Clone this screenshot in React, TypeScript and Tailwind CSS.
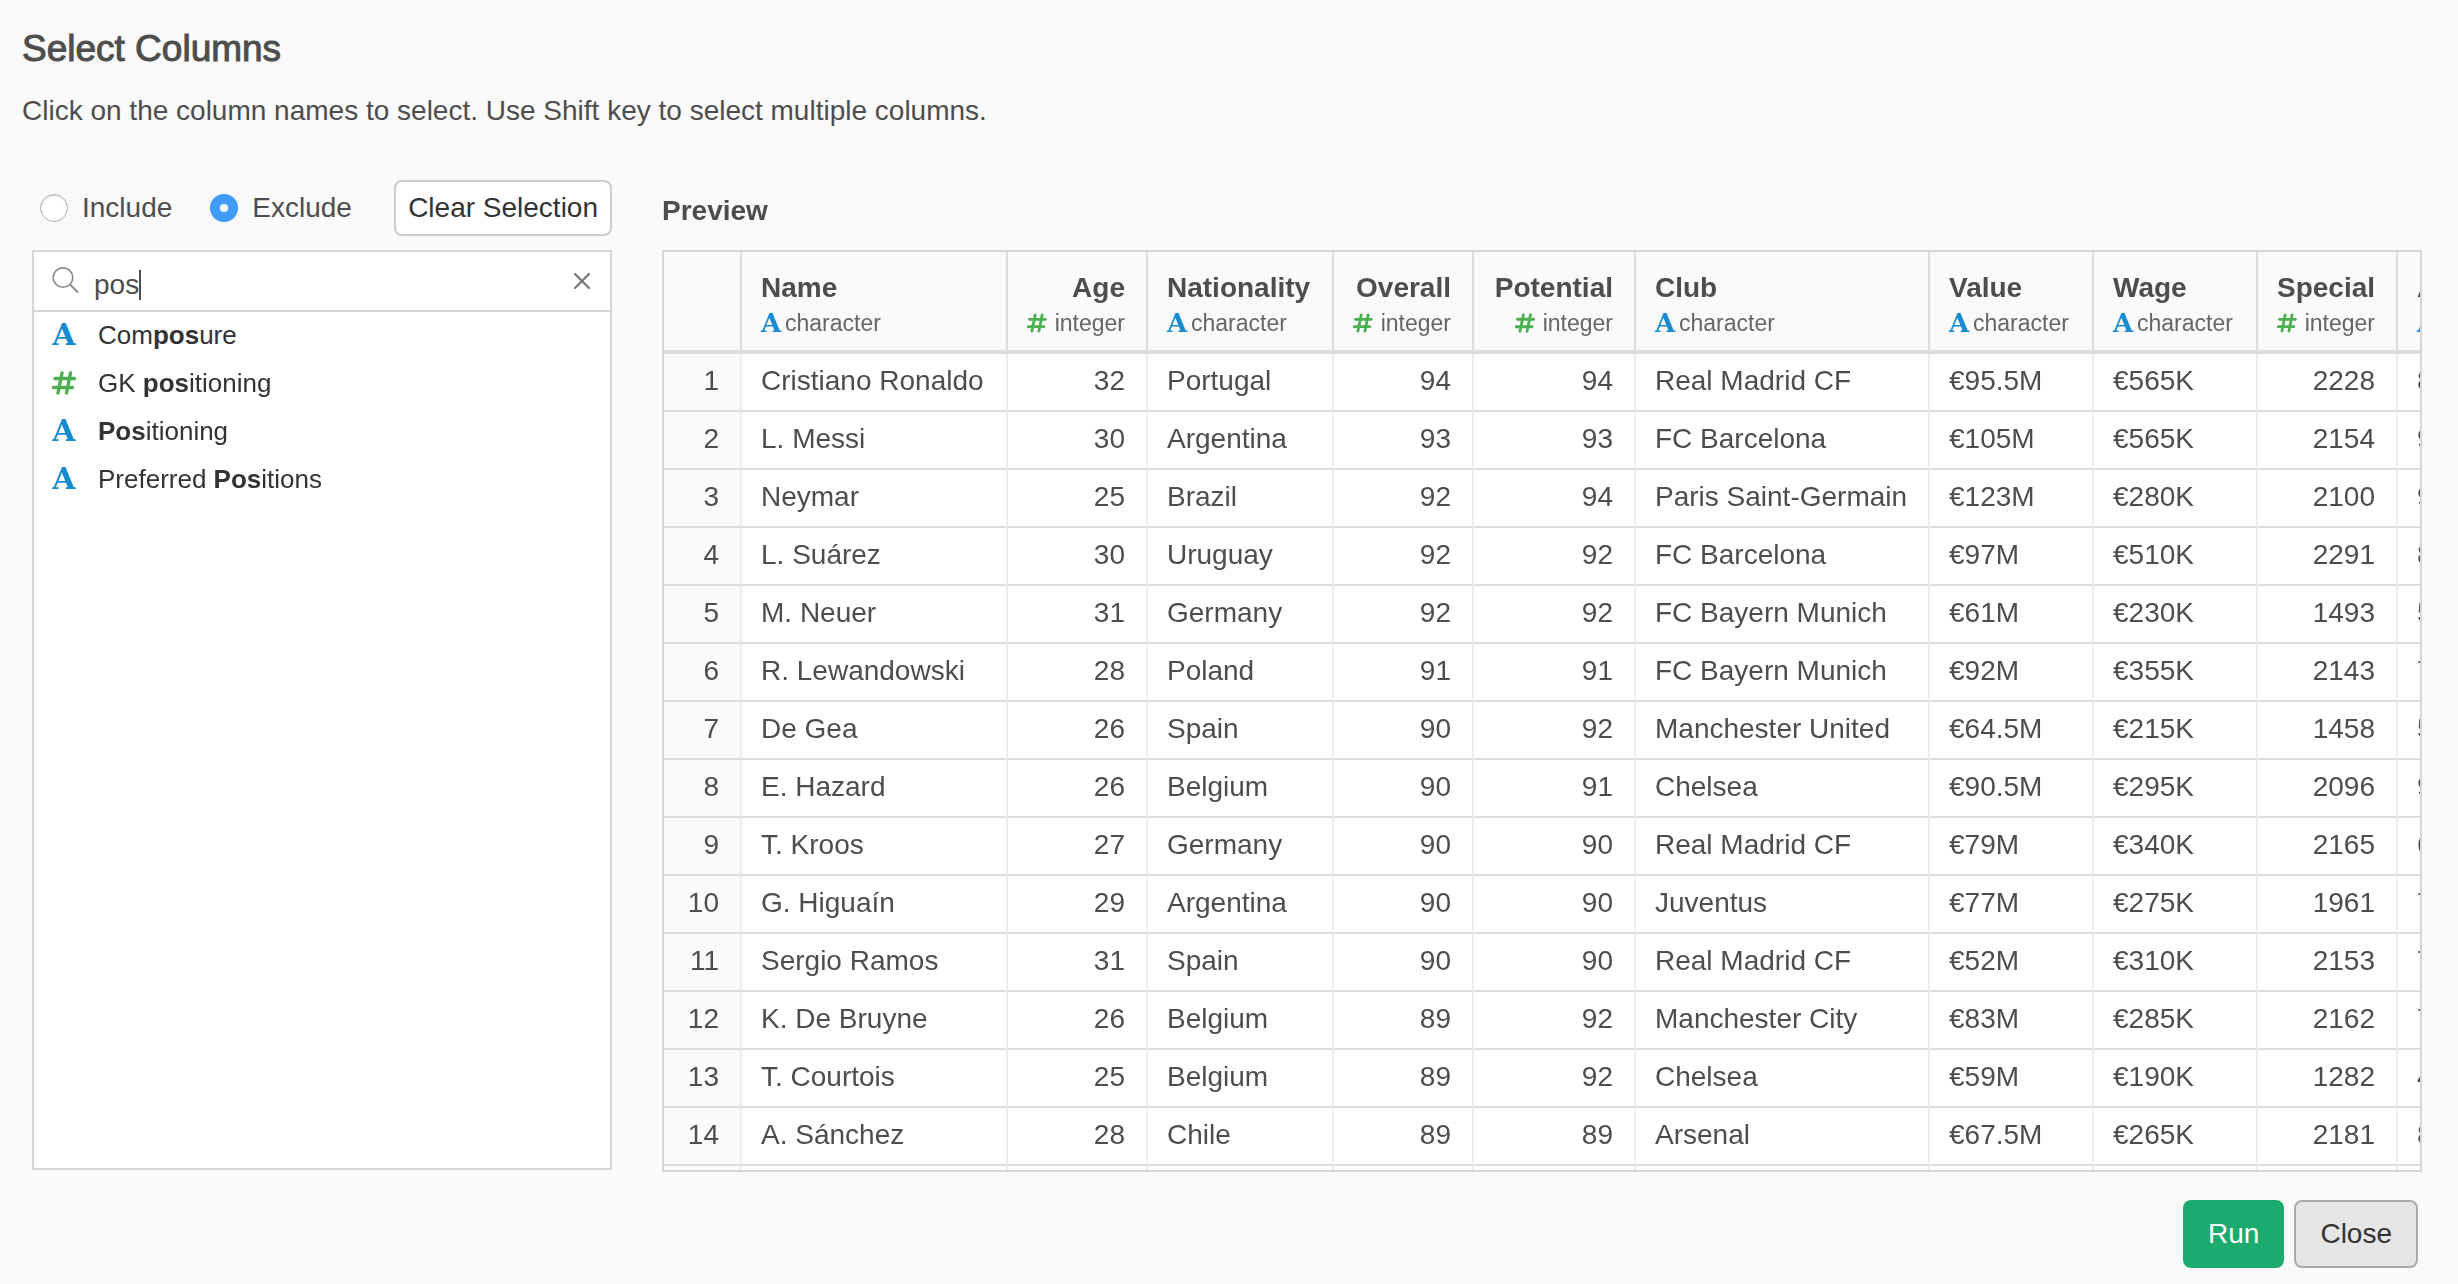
import { useState } from "react";

type ColumnType = "character" | "integer";

interface Column {
  name: string;
  type: ColumnType;
  width: string;
}

const columns: Column[] = [
  { name: "Name", type: "character", width: "w-[266px]" },
  { name: "Age", type: "integer", width: "w-[140px]" },
  { name: "Nationality", type: "character", width: "w-[186px]" },
  { name: "Overall", type: "integer", width: "w-[140px]" },
  { name: "Potential", type: "integer", width: "w-[162px]" },
  { name: "Club", type: "character", width: "w-[294px]" },
  { name: "Value", type: "character", width: "w-[164px]" },
  { name: "Wage", type: "character", width: "w-[164px]" },
  { name: "Special", type: "integer", width: "w-[140px]" },
  { name: "Acceleration", type: "character", width: "w-[200px]" },
];

const players = [
  ["Cristiano Ronaldo", "32", "Portugal", "94", "94", "Real Madrid CF", "€95.5M", "€565K", "2228", "89"],
  ["L. Messi", "30", "Argentina", "93", "93", "FC Barcelona", "€105M", "€565K", "2154", "92"],
  ["Neymar", "25", "Brazil", "92", "94", "Paris Saint-Germain", "€123M", "€280K", "2100", "94"],
  ["L. Suárez", "30", "Uruguay", "92", "92", "FC Barcelona", "€97M", "€510K", "2291", "88"],
  ["M. Neuer", "31", "Germany", "92", "92", "FC Bayern Munich", "€61M", "€230K", "1493", "58"],
  ["R. Lewandowski", "28", "Poland", "91", "91", "FC Bayern Munich", "€92M", "€355K", "2143", "79"],
  ["De Gea", "26", "Spain", "90", "92", "Manchester United", "€64.5M", "€215K", "1458", "57"],
  ["E. Hazard", "26", "Belgium", "90", "91", "Chelsea", "€90.5M", "€295K", "2096", "93"],
  ["T. Kroos", "27", "Germany", "90", "90", "Real Madrid CF", "€79M", "€340K", "2165", "60"],
  ["G. Higuaín", "29", "Argentina", "90", "90", "Juventus", "€77M", "€275K", "1961", "78"],
  ["Sergio Ramos", "31", "Spain", "90", "90", "Real Madrid CF", "€52M", "€310K", "2153", "75"],
  ["K. De Bruyne", "26", "Belgium", "89", "92", "Manchester City", "€83M", "€285K", "2162", "76"],
  ["T. Courtois", "25", "Belgium", "89", "92", "Chelsea", "€59M", "€190K", "1282", "46"],
  ["A. Sánchez", "28", "Chile", "89", "89", "Arsenal", "€67.5M", "€265K", "2181", "88"],
  ["", "", "", "", "", "", "", "", "", ""],
];

const allColumns: { name: string; type: ColumnType }[] = [
  { name: "Composure", type: "character" },
  { name: "GK positioning", type: "integer" },
  { name: "Positioning", type: "character" },
  { name: "Preferred Positions", type: "character" },
];

const TypeIcon = ({ type, className }: { type: ColumnType; className: string }) => {
  if (type === "integer") {
    return (
      <svg viewBox="0 0 24 24" className={className} fill="none" stroke="#4caf50" strokeWidth="3.4" strokeLinecap="round" aria-hidden="true">
        <path d="M10 2 6 22M18.5 2l-4 20M3 7.500H22.500M1.500 16.500h19" />
      </svg>
    );
  }
  return (
    <span className={`${className} flex items-center justify-center font-["DejaVu_Serif",serif] font-bold text-[#168bd2]`}>
      A
    </span>
  );
};

// Bold the part of the name that matches the search text
const Highlight = ({ text, query }: { text: string; query: string }) => {
  const start = text.toLowerCase().indexOf(query.toLowerCase());
  if (!query || start < 0) return <span>{text}</span>;
  const end = start + query.length;
  return (
    <span>
      {text.slice(0, start)}
      <b>{text.slice(start, end)}</b>
      {text.slice(end)}
    </span>
  );
};

const ModeRadio = ({ label, checked, onChange }: { label: string; checked: boolean; onChange: () => void }) => (
  <label className="flex items-center gap-[14px]">
    <input
      type="radio"
      name="mode"
      checked={checked}
      onChange={onChange}
      className="size-7 appearance-none rounded-full border border-[#b0b0b0] bg-white shadow-[inset_0_1px_2px_#00000022] checked:border-[10px] checked:border-[#409bfb] checked:shadow-none"
    />
    {label}
  </label>
);

const App = () => {
  const [mode, setMode] = useState("exclude");
  const [query, setQuery] = useState("pos");

  const matches = allColumns.filter((c) => c.name.toLowerCase().includes(query.toLowerCase()));

  return (
    <div className='flex min-h-screen flex-col bg-[#fafafa] font-["Liberation_Sans",Arial,sans-serif] text-[28px] leading-8 text-[#4d4d4d]'>
      <header className="px-[22px] pt-[26px]">
        <h1 className="text-[37px] leading-[46px] [-webkit-text-stroke:1px_#4d4d4d]">Select Columns</h1>
        <p className="mt-[23px]">Click on the column names to select. Use Shift key to select multiple columns.</p>
      </header>

      <main className="mt-[53px] flex pr-9 pl-8">
        <section className="w-[580px] shrink-0">
          <div className="flex h-14 items-center gap-[38px] pl-2">
            <ModeRadio label="Include" checked={mode === "include"} onChange={() => setMode("include")} />
            <ModeRadio label="Exclude" checked={mode === "exclude"} onChange={() => setMode("exclude")} />
            <button className="ml-auto h-14 rounded-lg border-2 border-[#ccc] bg-white px-3 text-[#333]">
              Clear Selection
            </button>
          </div>

          <div className="mt-[14px] h-[920px] border-2 border-[#d6d6d6] bg-white">
            <div className="flex h-[60px] items-center border-b-2 border-[#d6d6d6] pr-5 pl-[18px]">
              <svg viewBox="0 0 28 28" className="size-7 shrink-0" fill="none" stroke="#8c8c8c" strokeWidth="1.6" aria-hidden="true">
                <circle cx="11" cy="10.5" r="9.8" />
                <path d="m18 17.500 8 8" strokeWidth="2" />
              </svg>
              <label className="mt-2 ml-[14px] flex min-w-0 flex-1 items-center">
                <input
                  type="text"
                  aria-label="Search columns"
                  autoFocus
                  value={query}
                  onChange={(e) => setQuery(e.target.value)}
                  className="field-sizing-content max-w-full caret-transparent outline-none"
                />
                <span className="h-[30px] w-0.5 bg-[#4d4d4d]" />
              </label>
              <button aria-label="Clear search" onClick={() => setQuery("")}>
                <svg viewBox="0 0 16 16" className="size-4" fill="none" stroke="#777" strokeWidth="2.2" strokeLinecap="round">
                  <path d="m1 1 14 14M15 1 1 15" />
                </svg>
              </button>
            </div>
            <ul className="text-[26px] text-[#333]">
              {matches.map((c) => (
                <li key={c.name} className="flex h-12 items-center gap-[22px] pb-0.5 pl-[18px]">
                  <TypeIcon type={c.type} className="size-6 text-[30px]" />
                  <Highlight text={c.name} query={query} />
                </li>
              ))}
            </ul>
          </div>
        </section>

        <section className="ml-[50px] min-w-0 flex-1">
          <h2 className="flex h-[70px] items-center pb-2 font-bold">Preview</h2>
          <div className="h-[922px] overflow-hidden border-2 border-[#d6d6d6] bg-white">
            <table className="w-[1934px] table-fixed border-separate border-spacing-0">
              <thead>
                <tr className="h-[102px] bg-[#fafafa]">
                  <td className="w-[78px] border-r-2 border-b-4 border-[#dcdcdc]" />
                  {columns.map((c) => (
                    <th
                      key={c.name}
                      scope="col"
                      className={`${c.width} border-r-2 border-b-4 border-[#dcdcdc] px-[19px] pt-2 whitespace-nowrap ${c.type === "integer" ? "pr-[21px] text-right" : "text-left"}`}
                    >
                      {c.name}
                      <div className={`mt-[3px] flex items-center text-[23px] font-normal text-[#666] ${c.type === "integer" ? "justify-end gap-2" : "gap-1"}`}>
                        <TypeIcon type={c.type} className="size-5 text-[26px]" />
                        {c.type}
                      </div>
                    </th>
                  ))}
                </tr>
              </thead>
              <tbody>
                {players.map((row, i) => (
                  <tr key={i} className="h-[58px]">
                    <th scope="row" className="border-r-2 border-b-2 border-r-[#ececec] border-b-[#dcdcdc] bg-[#fafafa] pr-[21px] pb-0.5 text-right font-normal">
                      {row[0] && i + 1}
                    </th>
                    {row.map((value, j) => (
                      <td
                        key={columns[j].name}
                        className={`border-r-2 border-b-2 border-r-[#ececec] border-b-[#dcdcdc] px-[19px] pb-0.5 whitespace-nowrap ${columns[j].type === "integer" ? "pr-[21px] text-right" : "text-left"}`}
                      >
                        {value}
                      </td>
                    ))}
                  </tr>
                ))}
              </tbody>
            </table>
          </div>
        </section>
      </main>

      <footer className="mt-7 flex justify-end gap-[10px] pr-10 pb-4">
        <button className="h-[68px] rounded-lg bg-[#1bab6e] px-[25px] text-white">Run</button>
        <button className="h-[68px] rounded-lg border-2 border-[#aaa] bg-[#e6e6e6] px-6 text-[#333]">Close</button>
      </footer>
    </div>
  );
};

export default App;
